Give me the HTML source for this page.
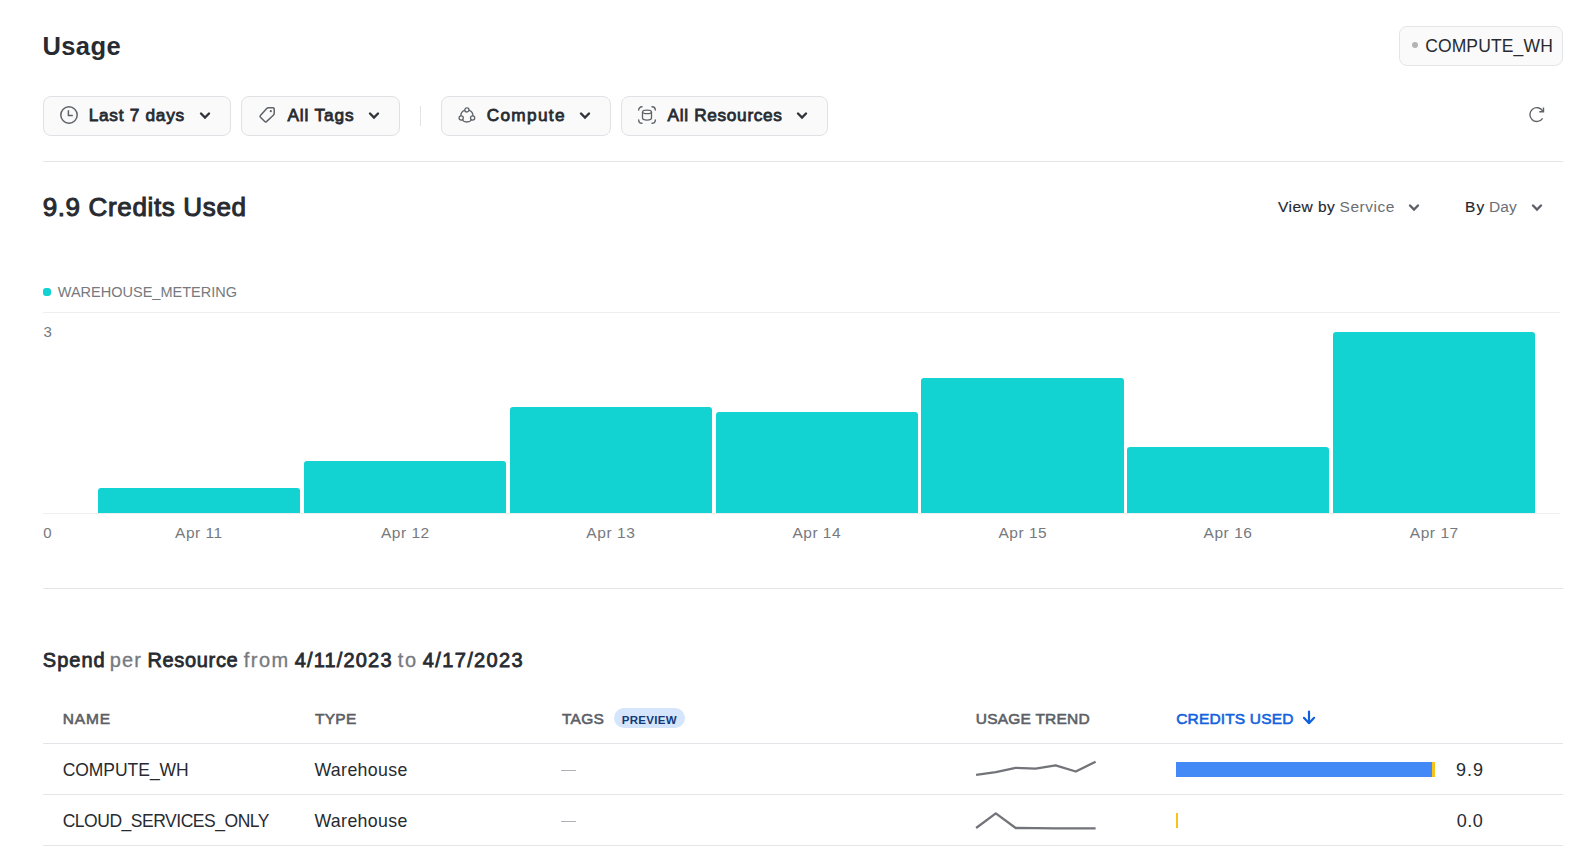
<!DOCTYPE html>
<html><head><meta charset="utf-8">
<style>
html,body{margin:0;padding:0;background:#fff;}
body{width:1581px;height:867px;position:relative;overflow:hidden;font-family:"Liberation Sans",sans-serif;color:#272b31;}
.a{position:absolute;}
.t{position:absolute;line-height:1;white-space:nowrap;}
.b{font-weight:700;}
.btn{position:absolute;top:96px;height:38px;border:1px solid #dfe1e5;border-radius:8px;background:#fafafa;box-sizing:content-box;}
.hl{position:absolute;height:1px;background:#e3e5e8;}
svg{position:absolute;overflow:visible;}
.g{color:#76797e;}
.th{font-size:15px;font-weight:400;-webkit-text-stroke-width:0.45px;color:#5c6066;}
.sb{font-weight:400;-webkit-text-stroke-width:0.5px;}
</style></head>
<body>

<!-- Title -->

<!-- chip -->
<div class="a" style="left:1399px;top:26px;width:162px;height:38px;border:1px solid #e3e5e8;border-radius:8px;background:#fafafa;"></div>
<div class="a" style="left:1412px;top:42px;width:6px;height:6px;border-radius:50%;background:#b2b3b5;"></div>

<!-- filter buttons -->
<div class="btn" style="left:43px;width:186px;"></div>
<div class="btn" style="left:241px;width:157px;"></div>
<div class="a" style="left:420px;top:106px;width:1px;height:20px;background:#e3e5e8;"></div>
<div class="btn" style="left:441px;width:168px;"></div>
<div class="btn" style="left:621px;width:205px;"></div>


<!-- clock icon -->
<svg style="left:60px;top:106px" width="18" height="18" viewBox="0 0 18 18"><circle cx="9" cy="9" r="8.2" fill="none" stroke="#5f6368" stroke-width="1.5"/><path d="M8.4 4.2V9.6H12.8" fill="none" stroke="#5f6368" stroke-width="1.5"/></svg>
<!-- tag icon -->
<svg style="left:259px;top:107px" width="16" height="16" viewBox="0 0 16 16"><path d="M9.5 0.8H14Q15.2 0.8 15.2 2V6.2Q15.2 7.4 14.32 8.22L7.48 14.58Q6.6 15.4 5.75 14.55L1.45 10.25Q0.6 9.4 1.4 8.51L7.5 1.69Q8.3 0.8 9.5 0.8Z" fill="none" stroke="#5f6368" stroke-width="1.5" stroke-linejoin="round"/><circle cx="11.8" cy="4.2" r="1.1" fill="#5f6368"/></svg>
<!-- compute icon -->
<svg style="left:457px;top:106px" width="20" height="18" viewBox="0 0 20 18"><path d="M8.13 4.17A6.06 6.06 0 0 0 3.85 10.25M11.67 4.17A6.06 6.06 0 0 1 15.95 10.25M5.04 13.58A6.06 6.06 0 0 0 14.76 13.58" fill="none" stroke="#5f6368" stroke-width="1.3"/><circle cx="9.9" cy="3.9" r="2.1" fill="none" stroke="#5f6368" stroke-width="1.3"/><circle cx="4.2" cy="12" r="2.1" fill="none" stroke="#5f6368" stroke-width="1.3"/><circle cx="15.6" cy="12" r="2.1" fill="none" stroke="#5f6368" stroke-width="1.3"/></svg>
<!-- resources icon -->
<svg style="left:638px;top:106px" width="18" height="18" viewBox="0 0 18 18"><path d="M0.7 4.0A3.3 3.3 0 0 1 4.0 0.7M14.0 0.7A3.3 3.3 0 0 1 17.3 4.0M17.3 14.0A3.3 3.3 0 0 1 14.0 17.3M4.0 17.3A3.3 3.3 0 0 1 0.7 14.0" fill="none" stroke="#5f6368" stroke-width="1.4" stroke-linecap="round"/><ellipse cx="9" cy="5.9" rx="4.5" ry="1.8" fill="none" stroke="#5f6368" stroke-width="1.3"/><path d="M4.5 5.9V12.1Q4.5 14.1 9 14.1Q13.5 14.1 13.5 12.1V5.9" fill="none" stroke="#5f6368" stroke-width="1.3"/></svg>
<!-- chevrons -->
<svg style="left:200px;top:112px" width="10" height="7" viewBox="0 0 10 7"><path d="M1 1.5L5 5.5L9 1.5" fill="none" stroke="#30343a" stroke-width="2.4" stroke-linecap="round"/></svg>
<svg style="left:369px;top:112px" width="10" height="7" viewBox="0 0 10 7"><path d="M1 1.5L5 5.5L9 1.5" fill="none" stroke="#30343a" stroke-width="2.4" stroke-linecap="round"/></svg>
<svg style="left:580px;top:112px" width="10" height="7" viewBox="0 0 10 7"><path d="M1 1.5L5 5.5L9 1.5" fill="none" stroke="#30343a" stroke-width="2.4" stroke-linecap="round"/></svg>
<svg style="left:797px;top:112px" width="10" height="7" viewBox="0 0 10 7"><path d="M1 1.5L5 5.5L9 1.5" fill="none" stroke="#30343a" stroke-width="2.4" stroke-linecap="round"/></svg>

<!-- refresh icon -->
<svg style="left:1528px;top:106px" width="18" height="18" viewBox="0 0 18 18"><path d="M14.6 12.3A6.9 6.9 0 1 1 14.8 5.2" fill="none" stroke="#5f6368" stroke-width="1.4"/><path d="M15.5 1.4V5.8H11.3" fill="none" stroke="#5f6368" stroke-width="1.4"/></svg>

<div class="hl" style="left:43px;top:161px;width:1520px;"></div>

<!-- Credits header -->
<svg style="left:1409px;top:204px" width="10" height="7" viewBox="0 0 10 7"><path d="M1 1.5L5 5.5L9 1.5" fill="none" stroke="#5b5f66" stroke-width="2.4" stroke-linecap="round"/></svg>
<svg style="left:1532px;top:204px" width="10" height="7" viewBox="0 0 10 7"><path d="M1 1.5L5 5.5L9 1.5" fill="none" stroke="#5b5f66" stroke-width="2.4" stroke-linecap="round"/></svg>

<!-- legend -->
<div class="a" style="left:43px;top:288px;width:8px;height:8px;border-radius:3px;background:#13d2d2;"></div>

<!-- chart -->
<div class="hl" style="left:43px;top:312px;width:1517px;background:#eceef0;"></div>
<div class="hl" style="left:43px;top:513px;width:1517px;background:#eceef0;"></div>

<div class="a" style="left:98px;top:488px;width:202px;height:25px;background:#13d2d2;border-radius:3px 3px 0 0;"></div>
<div class="a" style="left:304px;top:461px;width:202px;height:52px;background:#13d2d2;border-radius:3px 3px 0 0;"></div>
<div class="a" style="left:510px;top:407px;width:202px;height:106px;background:#13d2d2;border-radius:3px 3px 0 0;"></div>
<div class="a" style="left:716px;top:412px;width:202px;height:101px;background:#13d2d2;border-radius:3px 3px 0 0;"></div>
<div class="a" style="left:921px;top:378px;width:203px;height:135px;background:#13d2d2;border-radius:3px 3px 0 0;"></div>
<div class="a" style="left:1127px;top:447px;width:202px;height:66px;background:#13d2d2;border-radius:3px 3px 0 0;"></div>
<div class="a" style="left:1333px;top:332px;width:202px;height:181px;background:#13d2d2;border-radius:3px 3px 0 0;"></div>


<div class="hl" style="left:43px;top:588px;width:1520px;"></div>

<!-- Spend -->

<!-- table header -->
<div class="a" style="left:614px;top:708px;width:71px;height:20px;border-radius:10px;background:#d5e5fb;"></div>
<svg style="left:1302px;top:708px" width="14" height="18" viewBox="0 0 14 18"><path d="M7 3.6V15.2M1.9 9.8L7 15.2L12.1 9.8" fill="none" stroke="#0f60dd" stroke-width="2.2" stroke-linecap="round" stroke-linejoin="round"/></svg>

<div class="hl" style="left:43px;top:743px;width:1520px;"></div>
<div class="hl" style="left:43px;top:794px;width:1520px;"></div>
<div class="hl" style="left:43px;top:845px;width:1520px;"></div>

<!-- row 1 -->
<div class="a" style="left:561px;top:770px;width:15px;height:1px;background:#aeb1b5;"></div>
<svg style="left:0;top:0" width="1" height="1"><polyline points="976.1,774.8 995.8,772.2 1015.7,767.8 1035.6,768.6 1055.6,765.4 1075.8,771.5 1095.6,761.7" fill="none" stroke="#727479" stroke-width="2.3" stroke-linejoin="round"/></svg>
<div class="a" style="left:1176px;top:762px;width:256px;height:15px;background:#438af7;"></div>
<div class="a" style="left:1432px;top:762px;width:3px;height:15px;background:#f7c21a;"></div>

<!-- row 2 -->
<div class="a" style="left:561px;top:821px;width:15px;height:1px;background:#aeb1b5;"></div>
<svg style="left:0;top:0" width="1" height="1"><polyline points="976.1,828 995.8,813.4 1015.7,828 1035.6,828.2 1055.6,828.3 1075.8,828.4 1095.6,828.4" fill="none" stroke="#727479" stroke-width="2.3" stroke-linejoin="round"/></svg>
<div class="a" style="left:1176px;top:813px;width:2px;height:15px;background:#f7c21a;"></div>

<div class="t" style="left:42.44px;top:34.00px;font-size:25.50px;font-weight:700;letter-spacing:0.40px;">Usage</div>
<div class="t" style="left:1425.13px;top:38.00px;font-size:17.50px;letter-spacing:0.14px;">COMPUTE_WH</div>
<div class="t" style="left:88.67px;top:107.00px;font-size:17.25px;-webkit-text-stroke:0.8px #272b31;letter-spacing:0.73px;">Last 7 days</div>
<div class="t" style="left:287.41px;top:107.00px;font-size:17.25px;-webkit-text-stroke:0.8px #272b31;letter-spacing:0.86px;">All Tags</div>
<div class="t" style="left:486.69px;top:107.00px;font-size:17.25px;-webkit-text-stroke:0.8px #272b31;letter-spacing:1.30px;">Compute</div>
<div class="t" style="left:667.61px;top:107.00px;font-size:17.25px;-webkit-text-stroke:0.8px #272b31;letter-spacing:0.66px;">All Resources</div>
<div class="t" style="left:42.63px;top:194.00px;font-size:26.00px;-webkit-text-stroke:1.0px #272b31;letter-spacing:0.65px;">9.9 Credits Used</div>
<div class="t" style="left:1277.96px;top:199.00px;font-size:15.50px;-webkit-text-stroke:0.15px #24282e;color:#24282e;letter-spacing:0.48px;">View by</div>
<div class="t" style="left:1339.59px;top:199.00px;font-size:15.50px;color:#6b6f75;letter-spacing:0.51px;">Service</div>
<div class="t" style="left:1464.97px;top:199.00px;font-size:15.50px;-webkit-text-stroke:0.15px #24282e;color:#24282e;letter-spacing:1.26px;">By</div>
<div class="t" style="left:1489.08px;top:199.00px;font-size:15.50px;color:#6b6f75;letter-spacing:0.02px;">Day</div>
<div class="t" style="left:57.81px;top:285.00px;font-size:14.50px;color:#76797e;">WAREHOUSE_METERING</div>
<div class="t" style="left:43.47px;top:324.00px;font-size:15.00px;color:#76797e;">3</div>
<div class="t" style="left:43.21px;top:525.00px;font-size:15.00px;color:#76797e;">0</div>
<div class="t" style="left:175.05px;top:525.00px;font-size:15.50px;color:#76797e;letter-spacing:0.52px;">Apr 11</div>
<div class="t" style="left:380.93px;top:525.00px;font-size:15.50px;color:#76797e;letter-spacing:0.52px;">Apr 12</div>
<div class="t" style="left:586.24px;top:525.00px;font-size:15.50px;color:#76797e;letter-spacing:0.60px;">Apr 13</div>
<div class="t" style="left:792.52px;top:525.00px;font-size:15.50px;color:#76797e;letter-spacing:0.47px;">Apr 14</div>
<div class="t" style="left:998.51px;top:525.00px;font-size:15.50px;color:#76797e;letter-spacing:0.51px;">Apr 15</div>
<div class="t" style="left:1203.48px;top:525.00px;font-size:15.50px;color:#76797e;letter-spacing:0.57px;">Apr 16</div>
<div class="t" style="left:1409.77px;top:525.00px;font-size:15.50px;color:#76797e;letter-spacing:0.55px;">Apr 17</div>
<div class="t" style="left:42.78px;top:650.00px;font-size:20.00px;-webkit-text-stroke:0.8px #272b31;letter-spacing:1.02px;">Spend</div>
<div class="t" style="left:109.68px;top:650.00px;font-size:20.00px;-webkit-text-stroke:0.3px #76797e;color:#76797e;letter-spacing:1.21px;">per</div>
<div class="t" style="left:147.44px;top:650.00px;font-size:20.00px;-webkit-text-stroke:0.8px #272b31;letter-spacing:0.67px;">Resource</div>
<div class="t" style="left:243.68px;top:650.00px;font-size:20.00px;-webkit-text-stroke:0.3px #76797e;color:#76797e;letter-spacing:1.50px;">from</div>
<div class="t" style="left:294.68px;top:650.00px;font-size:20.00px;-webkit-text-stroke:0.8px #272b31;letter-spacing:1.17px;">4/11/2023</div>
<div class="t" style="left:397.83px;top:650.00px;font-size:20.00px;-webkit-text-stroke:0.3px #76797e;color:#76797e;letter-spacing:1.50px;">to</div>
<div class="t" style="left:422.83px;top:650.00px;font-size:20.00px;-webkit-text-stroke:0.8px #272b31;letter-spacing:1.36px;">4/17/2023</div>
<div class="t" style="left:62.79px;top:711.00px;font-size:15.50px;-webkit-text-stroke:0.6px #5c6066;color:#5c6066;letter-spacing:0.86px;">NAME</div>
<div class="t" style="left:314.91px;top:711.00px;font-size:15.50px;-webkit-text-stroke:0.6px #5c6066;color:#5c6066;letter-spacing:0.33px;">TYPE</div>
<div class="t" style="left:561.89px;top:711.00px;font-size:15.50px;-webkit-text-stroke:0.6px #5c6066;color:#5c6066;letter-spacing:0.32px;">TAGS</div>
<div class="t" style="left:975.80px;top:711.00px;font-size:15.50px;-webkit-text-stroke:0.6px #5c6066;color:#5c6066;letter-spacing:0.22px;">USAGE TREND</div>
<div class="t" style="left:1176.23px;top:711.00px;font-size:15.50px;-webkit-text-stroke:0.6px #1463dd;color:#1463dd;letter-spacing:0.16px;">CREDITS USED</div>
<div class="t" style="left:621.70px;top:715.00px;font-size:11.50px;font-weight:700;color:#123a78;letter-spacing:0.30px;">PREVIEW</div>
<div class="t" style="left:62.66px;top:762.00px;font-size:17.50px;letter-spacing:-0.04px;">COMPUTE_WH</div>
<div class="t" style="left:314.40px;top:762.00px;font-size:17.75px;letter-spacing:0.37px;">Warehouse</div>
<div class="t" style="left:1456.06px;top:761.00px;font-size:18.00px;letter-spacing:0.91px;">9.9</div>
<div class="t" style="left:62.65px;top:813.00px;font-size:17.50px;letter-spacing:-0.47px;">CLOUD_SERVICES_ONLY</div>
<div class="t" style="left:314.40px;top:813.00px;font-size:17.75px;letter-spacing:0.37px;">Warehouse</div>
<div class="t" style="left:1456.87px;top:812.00px;font-size:18.00px;letter-spacing:0.49px;">0.0</div>
</body></html>
